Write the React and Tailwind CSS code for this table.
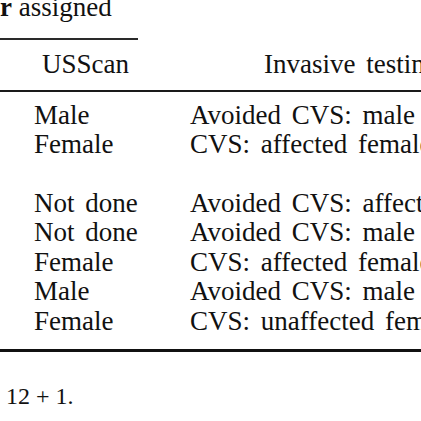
import React from 'react';

const rows = [
  ['Male', 'Avoided CVS: male'],
  ['Female', 'CVS: affected female'],
  ['', ''],
  ['Not done', 'Avoided CVS: affected male'],
  ['Not done', 'Avoided CVS: male'],
  ['Female', 'CVS: affected female'],
  ['Male', 'Avoided CVS: male'],
  ['Female', 'CVS: unaffected female'],
];

const App = () => {
  return (
    <div
      className="w-[421px] h-[421px] overflow-hidden bg-white text-[#111] [word-spacing:4px]"
      style={{ fontFamily: '"Liberation Serif", "Times New Roman", serif' }}
    >
      {/* caption tail */}
      <div className="-mt-[7px] text-[27px] leading-[29.4px] whitespace-nowrap [word-spacing:0px]">
        <span className="font-bold">r</span> assigned
      </div>
      <div className="mt-[16px] w-[138px] h-[2px] bg-[#2a2a2a]" />

      {/* header */}
      <div className="mt-[10px] flex text-[27px] leading-[29.4px] whitespace-nowrap">
        <div className="w-[264px] shrink-0 pl-[42px]">USScan</div>
        <div>Invasive testing</div>
      </div>
      <div className="mt-[10px] w-full h-[2px] bg-[#1a1a1a]" />

      {/* body */}
      <div className="mt-[9px] text-[27px] leading-[29.4px]">
        {rows.map((r, i) => (
          <div key={i} className="flex h-[29.4px] whitespace-nowrap">
            <div className="w-[190px] shrink-0 pl-[34px]">{r[0]}</div>
            <div>{r[1]}</div>
          </div>
        ))}
      </div>
      <div className="mt-[13px] w-full h-[3px] bg-[#111]" />

      {/* footnote */}
      <div className="mt-[30px] pl-[6px] text-[24px] leading-[28px] whitespace-nowrap [word-spacing:0px]">
        12 + 1.
      </div>
    </div>
  );
};

export default App;
